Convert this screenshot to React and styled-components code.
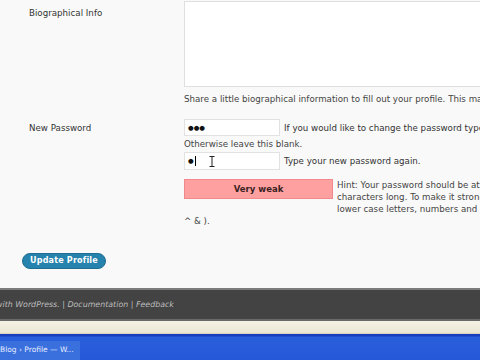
import React from 'react'
import styled, { createGlobalStyle } from 'styled-components'

const GlobalStyle = createGlobalStyle`
  html, body {
    margin: 0;
    padding: 0;
    width: 480px;
    height: 360px;
    overflow: hidden;
    background: #f9f9f9;
  }
  body {
    font-family: "DejaVu Sans", Verdana, sans-serif;
    font-size: 8.7px;
    color: #333;
  }
`

const Page = styled.div`
  display: flex;
  flex-direction: column;
  width: 480px;
  height: 360px;
  overflow: hidden;
`

const Content = styled.main`
  height: 288px;
  overflow: hidden;
  background: #f9f9f9;
  padding-top: 1px;
  box-sizing: border-box;
`

const Row = styled.div`
  display: flex;
  margin-bottom: ${(p) => p.$gap || 0}px;
`

const Label = styled.div`
  width: 155px;
  flex: none;
  padding-left: 29px;
  padding-top: ${(p) => p.$top || 0}px;
  color: #333;
  line-height: 12px;
  white-space: nowrap;
`

const Field = styled.div`
  flex: none;
  width: 400px;
  white-space: nowrap;
`

const TextArea = styled.div`
  width: 400px;
  height: 84px;
  background: #fff;
  border: 1px solid #dfdfdf;
`

const Note = styled.div`
  line-height: 13px;
  margin-top: ${(p) => p.$top || 0}px;
  color: #444;
`

const InputLine = styled.div`
  display: flex;
  align-items: center;
  gap: 4px;
  margin-top: ${(p) => p.$top || 0}px;
`

const Input = styled.div`
  position: relative;
  width: 91px;
  height: ${(p) => p.$h}px;
  background: #fff;
  border: 1px solid #e2e2e2;
  display: flex;
  align-items: center;
  padding-left: 3px;
  box-sizing: content-box;
  font-size: 6.5px;
  color: #111;
`

const Caret = styled.span`
  display: inline-block;
  width: 1px;
  height: 10px;
  background: #000;
  margin-left: 1px;
`

const IBeam = styled.svg`
  position: absolute;
  left: 24px;
  top: 3px;
`

const Hint = styled.div`
  margin-top: 9px;
  line-height: 12px;
  color: #444;
  width: 400px;
`

const Strength = styled.div`
  float: left;
  width: 147px;
  height: 18px;
  margin: 0 4px 6px 0;
  background: #ffa0a0;
  border: 1px solid #f08a8a;
  color: #3a2222;
  font-weight: bold;
  font-size: 8.5px;
  text-align: center;
  line-height: 18px;
`

const HintLine = styled.div`
  overflow: hidden;
`

const ButtonRow = styled.div`
  padding-left: 22px;
  margin-top: 26px;
`

const Button = styled.div`
  display: inline-block;
  width: 82px;
  height: 14px;
  line-height: 14px;
  text-align: center;
  background: #2583ad;
  border: 1px solid #1f6d92;
  border-radius: 8px;
  color: #fff;
  font-weight: bold;
  font-size: 8px;
  letter-spacing: 0.2px;
`

const Footer = styled.footer`
  height: 29px;
  background: #434343;
  border-top: 2px solid #7c7c7c;
  border-bottom: 2px solid #6a6a6a;
  display: flex;
  align-items: center;
  flex: none;
`

const FooterText = styled.p`
  margin: 0 0 0 -4px;
  font-style: italic;
  color: #bdbdbd;
  font-size: 7.9px;
  white-space: nowrap;
`

const StatusBar = styled.div`
  height: 12px;
  flex: none;
  background: linear-gradient(#f6f3e6, #ebe7d3);
  border-bottom: 1px solid #d8d2bd;
`

const Taskbar = styled.div`
  flex: 1;
  background: linear-gradient(#1a3fbe 0, #1a3fbe 2px, #2a5fdc 3px, #2458d8 100%);
  display: flex;
  align-items: flex-end;
`

const TaskTab = styled.div`
  width: 80px;
  height: 19px;
  background: #3a70de;
  color: #e8eeff;
  font-size: 7.5px;
  line-height: 17px;
  white-space: nowrap;
  overflow: hidden;
`

export default function App() {
  return (
    <Page>
      <GlobalStyle />
      <Content>
        <Row $gap={13}>
          <Label $top={6}>Biographical Info</Label>
          <Field>
            <TextArea />
            <Note $top={6}>
              Share a little biographical information to fill out your profile. This may be shown publicly.
            </Note>
          </Field>
        </Row>
        <Row>
          <Label $top={3}>New Password</Label>
          <Field>
            <InputLine>
              <Input $h={15}>●●●</Input>
              <span>If you would like to change the password type a new one.</span>
            </InputLine>
            <Note $top={2}>Otherwise leave this blank.</Note>
            <InputLine $top={1}>
              <Input $h={16}>
                ●<Caret />
                <IBeam width="6" height="11" viewBox="0 0 6 11">
                  <path d="M0.5 0.5h5M3 0.5v10M0.5 10.5h5" stroke="#222" strokeWidth="1" fill="none" />
                </IBeam>
              </Input>
              <span>Type your new password again.</span>
            </InputLine>
            <Hint>
              <Strength>Very weak</Strength>
              <HintLine>Hint: Your password should be at least seven</HintLine>
              <HintLine>characters long. To make it stronger, use upper and</HintLine>
              <HintLine>lower case letters, numbers and symbols like ! " ? $ %</HintLine>
              <HintLine>^ &amp; ).</HintLine>
            </Hint>
          </Field>
        </Row>
        <ButtonRow>
          <Button>Update Profile</Button>
        </ButtonRow>
      </Content>
      <Footer>
        <FooterText>with WordPress. | Documentation | Feedback</FooterText>
      </Footer>
      <StatusBar />
      <Taskbar>
        <TaskTab>Blog › Profile — W...</TaskTab>
      </Taskbar>
    </Page>
  )
}
